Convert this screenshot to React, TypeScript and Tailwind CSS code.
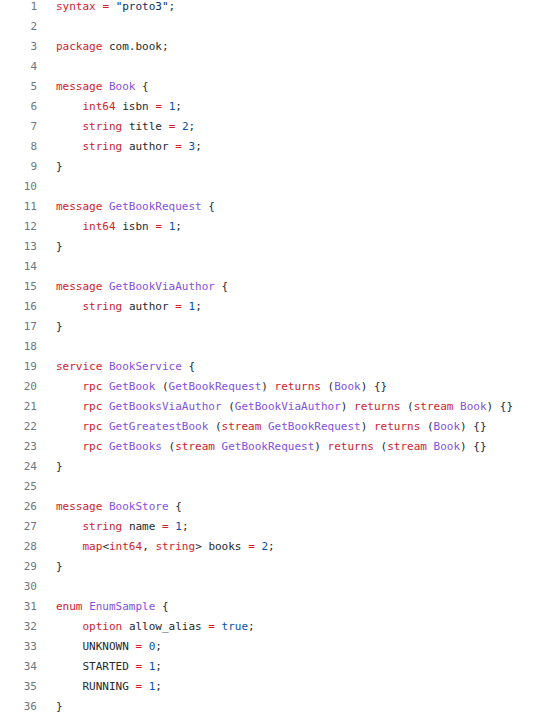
const SOURCE = `syntax = "proto3";

package com.book;

message Book {
    int64 isbn = 1;
    string title = 2;
    string author = 3;
}

message GetBookRequest {
    int64 isbn = 1;
}

message GetBookViaAuthor {
    string author = 1;
}

service BookService {
    rpc GetBook (GetBookRequest) returns (Book) {}
    rpc GetBooksViaAuthor (GetBookViaAuthor) returns (stream Book) {}
    rpc GetGreatestBook (stream GetBookRequest) returns (Book) {}
    rpc GetBooks (stream GetBookRequest) returns (stream Book) {}
}

message BookStore {
    string name = 1;
    map<int64, string> books = 2;
}

enum EnumSample {
    option allow_alias = true;
    UNKNOWN = 0;
    STARTED = 1;
    RUNNING = 1;
}`;

const KEYWORDS = new Set([
  "syntax",
  "package",
  "message",
  "service",
  "enum",
  "rpc",
  "returns",
  "stream",
  "option",
  "int64",
  "string",
  "map",
]);

function tokenClass(tok: string) {
  if (KEYWORDS.has(tok) || tok === "=") return "text-[#cf222e]";
  if (tok.startsWith('"')) return "text-[#0a3069]";
  if (/^\d+$/.test(tok) || tok === "true") return "text-[#0550ae]";
  if (/^[A-Z]\w*[a-z]\w*$/.test(tok)) return "text-[#8250df]";
  return "text-[#24292f]";
}

function CodeLine({ text }: { text: string }) {
  const parts = text.split(/(\s+|"[^"]*"|\w+|[^\w\s])/).filter(Boolean);
  return (
    <>
      {parts.map((p, i) =>
        /^\s+$/.test(p) ? (
          <span key={i}>{p}</span>
        ) : (
          <span key={i} className={tokenClass(p)}>
            {p}
          </span>
        )
      )}
    </>
  );
}

export default function App() {
  const lines = SOURCE.split("\n");
  return (
    <div className="min-h-screen w-full bg-white overflow-hidden">
      <div className="-mt-[3px] font-['DejaVu_Sans_Mono',monospace] text-[11px] leading-[20px]">
        {lines.map((l, i) => (
          <div key={i} className="flex h-[20px]">
            <span className="w-[37px] shrink-0 text-right text-[#6e7781]">{i + 1}</span>
            <span className="pl-[19px] whitespace-pre">
              <CodeLine text={l} />
            </span>
          </div>
        ))}
      </div>
    </div>
  );
}
